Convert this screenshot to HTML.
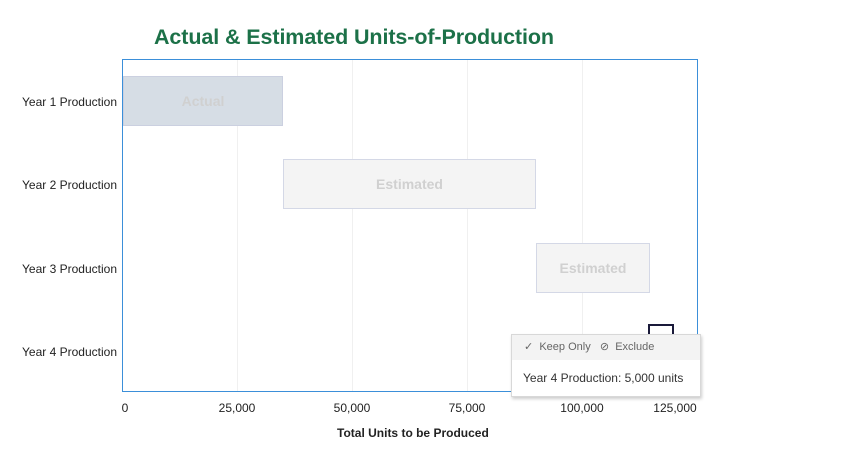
<!DOCTYPE html>
<html><head><style>
body{margin:0;width:842px;height:461px;background:#fff;font-family:"Liberation Sans",sans-serif;position:relative;overflow:hidden}
.a{position:absolute}
.lab{font-size:12px;color:#222;right:725px;white-space:nowrap}
.tick{font-size:12px;color:#222;top:401px;transform:translateX(-50%)}
.grid{top:60px;height:332px;width:1px;background:#f0f0f0}
.bar{display:flex;align-items:center;justify-content:center;font-weight:bold;font-size:14px;color:#d0d0d0;box-sizing:border-box}
</style></head><body>
<div class="a" style="left:154px;top:25px;font-size:21.5px;font-weight:bold;color:#1c7148;letter-spacing:-0.1px">Actual &amp; Estimated Units-of-Production</div>
<div class="a grid" style="left:237px"></div>
<div class="a grid" style="left:352px"></div>
<div class="a grid" style="left:467px"></div>
<div class="a grid" style="left:582px"></div>
<div class="a" style="left:122px;top:59px;width:576px;height:333px;border-left:1px solid #3b8fd9;border-top:1px solid #3b8fd9;border-bottom:1px solid #3b8fd9;box-sizing:border-box"></div>
<div class="a" style="left:697px;top:59px;width:1px;height:275px;background:#3b8fd9"></div>
<div class="a bar" style="left:123px;top:76px;width:160px;height:50px;background:#d6dde5;border:1px solid #cbd0e0">Actual</div>
<div class="a bar" style="left:283px;top:159px;width:253px;height:50px;background:#f4f4f4;border:1px solid #d4d8e6">Estimated</div>
<div class="a bar" style="left:536px;top:243px;width:114px;height:50px;background:#f4f4f4;border:1px solid #d4d8e6">Estimated</div>
<div class="a" style="left:648px;top:324px;width:26px;height:20px;border:2px solid #1a1a3a;box-sizing:border-box;background:#fff"></div>
<div class="a lab" style="top:95px">Year 1 Production</div>
<div class="a lab" style="top:178px">Year 2 Production</div>
<div class="a lab" style="top:262px">Year 3 Production</div>
<div class="a lab" style="top:345px">Year 4 Production</div>
<div class="a tick" style="left:125px">0</div>
<div class="a tick" style="left:237px">25,000</div>
<div class="a tick" style="left:352px">50,000</div>
<div class="a tick" style="left:467px">75,000</div>
<div class="a tick" style="left:582px">100,000</div>
<div class="a tick" style="left:675px">125,000</div>
<div class="a" style="left:337px;top:426px;font-size:12px;font-weight:bold;color:#222">Total Units to be Produced</div>
<div class="a" style="left:511px;top:334px;width:190px;height:63px;background:#fff;border:1px solid #d8d8d8;box-shadow:1px 2px 3px rgba(0,0,0,.2);box-sizing:border-box">
<div style="height:25px;background:#f3f3f3;font-size:11px;color:#666;line-height:25px;padding-left:12px">✓&nbsp; Keep Only &nbsp;&nbsp;⊘&nbsp; Exclude</div>
<div style="font-size:12px;color:#333;padding:11px 0 0 11px">Year 4 Production: 5,000 units</div>
</div>
</body></html>
